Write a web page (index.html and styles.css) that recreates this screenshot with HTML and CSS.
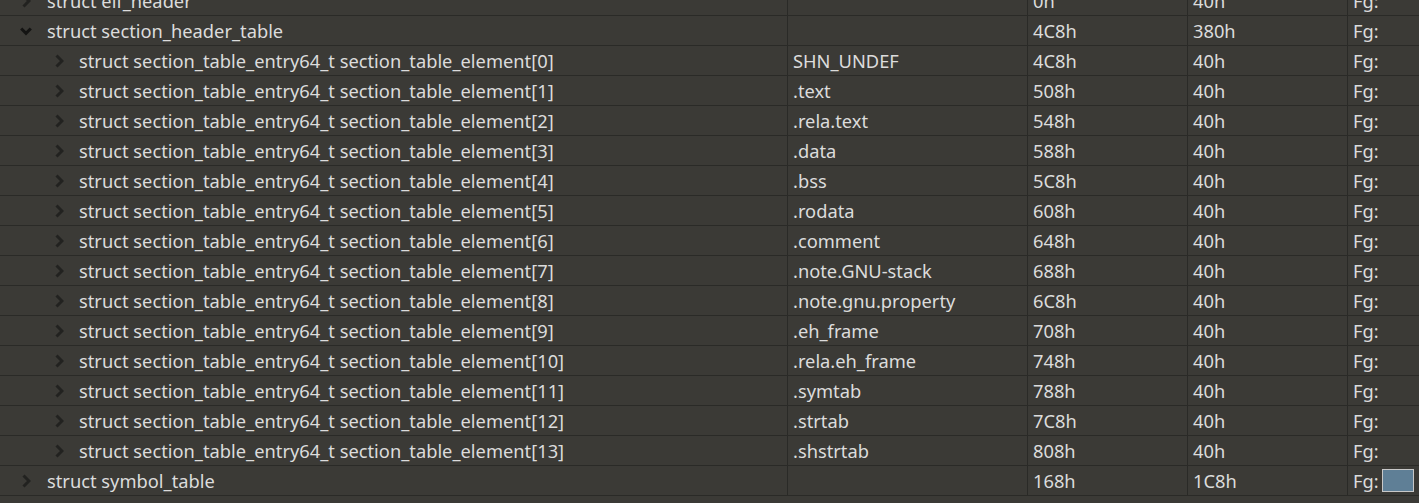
FILE: index.html
```html
<!DOCTYPE html>
<html>
<head>
<meta charset="utf-8">
<link rel="stylesheet" href="styles.css">
</head>
<body>
<div class="view">
  <div class="table">
    <div class="row">
      <div class="cell name l1"><span class="chev closed"><svg width="9" height="14" viewBox="0 0 9 14"><path d="M1.5 1.5 L7 7 L1.5 12.5" /></svg></span>struct elf_header</div>
      <div class="cell"></div><div class="cell">0h</div><div class="cell">40h</div><div class="cell">Fg:</div>
    </div>
    <div class="row">
      <div class="cell name l1"><span class="chev open"><svg width="12" height="14" viewBox="0 0 12 14"><path d="M1.2 4.5 L6 9.3 L10.8 4.5" /></svg></span>struct section_header_table</div>
      <div class="cell"></div><div class="cell">4C8h</div><div class="cell">380h</div><div class="cell">Fg:</div>
    </div>
    <div class="row">
      <div class="cell name l2"><span class="chev closed"><svg width="9" height="14" viewBox="0 0 9 14"><path d="M1.5 1.5 L7 7 L1.5 12.5" /></svg></span>struct section_table_entry64_t section_table_element[0]</div>
      <div class="cell">SHN_UNDEF</div><div class="cell">4C8h</div><div class="cell">40h</div><div class="cell">Fg:</div>
    </div>
    <div class="row">
      <div class="cell name l2"><span class="chev closed"><svg width="9" height="14" viewBox="0 0 9 14"><path d="M1.5 1.5 L7 7 L1.5 12.5" /></svg></span>struct section_table_entry64_t section_table_element[1]</div>
      <div class="cell">.text</div><div class="cell">508h</div><div class="cell">40h</div><div class="cell">Fg:</div>
    </div>
    <div class="row">
      <div class="cell name l2"><span class="chev closed"><svg width="9" height="14" viewBox="0 0 9 14"><path d="M1.5 1.5 L7 7 L1.5 12.5" /></svg></span>struct section_table_entry64_t section_table_element[2]</div>
      <div class="cell">.rela.text</div><div class="cell">548h</div><div class="cell">40h</div><div class="cell">Fg:</div>
    </div>
    <div class="row">
      <div class="cell name l2"><span class="chev closed"><svg width="9" height="14" viewBox="0 0 9 14"><path d="M1.5 1.5 L7 7 L1.5 12.5" /></svg></span>struct section_table_entry64_t section_table_element[3]</div>
      <div class="cell">.data</div><div class="cell">588h</div><div class="cell">40h</div><div class="cell">Fg:</div>
    </div>
    <div class="row">
      <div class="cell name l2"><span class="chev closed"><svg width="9" height="14" viewBox="0 0 9 14"><path d="M1.5 1.5 L7 7 L1.5 12.5" /></svg></span>struct section_table_entry64_t section_table_element[4]</div>
      <div class="cell">.bss</div><div class="cell">5C8h</div><div class="cell">40h</div><div class="cell">Fg:</div>
    </div>
    <div class="row">
      <div class="cell name l2"><span class="chev closed"><svg width="9" height="14" viewBox="0 0 9 14"><path d="M1.5 1.5 L7 7 L1.5 12.5" /></svg></span>struct section_table_entry64_t section_table_element[5]</div>
      <div class="cell">.rodata</div><div class="cell">608h</div><div class="cell">40h</div><div class="cell">Fg:</div>
    </div>
    <div class="row">
      <div class="cell name l2"><span class="chev closed"><svg width="9" height="14" viewBox="0 0 9 14"><path d="M1.5 1.5 L7 7 L1.5 12.5" /></svg></span>struct section_table_entry64_t section_table_element[6]</div>
      <div class="cell">.comment</div><div class="cell">648h</div><div class="cell">40h</div><div class="cell">Fg:</div>
    </div>
    <div class="row">
      <div class="cell name l2"><span class="chev closed"><svg width="9" height="14" viewBox="0 0 9 14"><path d="M1.5 1.5 L7 7 L1.5 12.5" /></svg></span>struct section_table_entry64_t section_table_element[7]</div>
      <div class="cell">.note.GNU-stack</div><div class="cell">688h</div><div class="cell">40h</div><div class="cell">Fg:</div>
    </div>
    <div class="row">
      <div class="cell name l2"><span class="chev closed"><svg width="9" height="14" viewBox="0 0 9 14"><path d="M1.5 1.5 L7 7 L1.5 12.5" /></svg></span>struct section_table_entry64_t section_table_element[8]</div>
      <div class="cell">.note.gnu.property</div><div class="cell">6C8h</div><div class="cell">40h</div><div class="cell">Fg:</div>
    </div>
    <div class="row">
      <div class="cell name l2"><span class="chev closed"><svg width="9" height="14" viewBox="0 0 9 14"><path d="M1.5 1.5 L7 7 L1.5 12.5" /></svg></span>struct section_table_entry64_t section_table_element[9]</div>
      <div class="cell">.eh_frame</div><div class="cell">708h</div><div class="cell">40h</div><div class="cell">Fg:</div>
    </div>
    <div class="row">
      <div class="cell name l2"><span class="chev closed"><svg width="9" height="14" viewBox="0 0 9 14"><path d="M1.5 1.5 L7 7 L1.5 12.5" /></svg></span>struct section_table_entry64_t section_table_element[10]</div>
      <div class="cell">.rela.eh_frame</div><div class="cell">748h</div><div class="cell">40h</div><div class="cell">Fg:</div>
    </div>
    <div class="row">
      <div class="cell name l2"><span class="chev closed"><svg width="9" height="14" viewBox="0 0 9 14"><path d="M1.5 1.5 L7 7 L1.5 12.5" /></svg></span>struct section_table_entry64_t section_table_element[11]</div>
      <div class="cell">.symtab</div><div class="cell">788h</div><div class="cell">40h</div><div class="cell">Fg:</div>
    </div>
    <div class="row">
      <div class="cell name l2"><span class="chev closed"><svg width="9" height="14" viewBox="0 0 9 14"><path d="M1.5 1.5 L7 7 L1.5 12.5" /></svg></span>struct section_table_entry64_t section_table_element[12]</div>
      <div class="cell">.strtab</div><div class="cell">7C8h</div><div class="cell">40h</div><div class="cell">Fg:</div>
    </div>
    <div class="row">
      <div class="cell name l2"><span class="chev closed"><svg width="9" height="14" viewBox="0 0 9 14"><path d="M1.5 1.5 L7 7 L1.5 12.5" /></svg></span>struct section_table_entry64_t section_table_element[13]</div>
      <div class="cell">.shstrtab</div><div class="cell">808h</div><div class="cell">40h</div><div class="cell">Fg:</div>
    </div>
    <div class="row">
      <div class="cell name l1"><span class="chev closed"><svg width="9" height="14" viewBox="0 0 9 14"><path d="M1.5 1.5 L7 7 L1.5 12.5" /></svg></span>struct symbol_table</div>
      <div class="cell"></div><div class="cell">168h</div><div class="cell">1C8h</div><div class="cell fg">Fg:<span class="swatch"></span></div>
    </div>
  </div>
</div>
</body>
</html>
```
FILE: styles.css
```css
html, body {
  margin: 0;
  padding: 0;
  background: #3b3a36;
  overflow: hidden;
}
.view {
  width: 1419px;
  height: 503px;
  overflow: hidden;
}
.table {
  margin-top: -14px;
  font-family: "Noto Sans", "Open Sans", sans-serif;
  font-size: 18.3px;
  color: #dcdcdc;
}
.row {
  display: grid;
  grid-template-columns: 787px 240px 160px 160px 1fr;
  height: 30px;
  box-sizing: border-box;
  border-bottom: 1px solid #2a2a27;
}
.cell {
  display: flex;
  align-items: center;
  padding-left: 5px;
  border-left: 1px solid #2a2a27;
  white-space: nowrap;
  overflow: hidden;
  line-height: 29px;
}
.cell.name {
  border-left: none;
}
.chev {
  display: flex;
  align-items: center;
  justify-content: center;
  width: 12px;
  height: 29px;
}
.chev svg path {
  fill: none;
  stroke-width: 3;
  stroke-linecap: butt;
  stroke-linejoin: miter;
}
.chev.closed svg path { stroke: #222220; }
.chev.open svg path { stroke: #141413; }
.cell.l1 { padding-left: 20px; }
.cell.l1 .chev { margin-right: 15px; }
.cell.l2 { padding-left: 53px; }
.cell.l2 .chev { margin-right: 14px; }
.swatch {
  display: inline-block;
  width: 30px;
  height: 21px;
  margin-left: 3px;
  background: #5f7f96;
  border: 1px solid #c8c8c8;
}
```
